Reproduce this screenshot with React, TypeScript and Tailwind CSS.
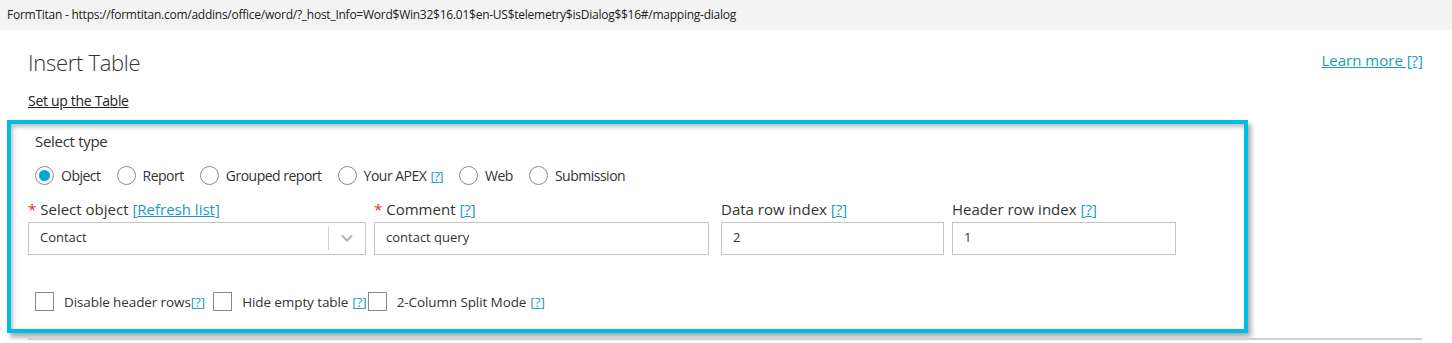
import React from "react"

const font = { fontFamily: '"Open Sans", "Noto Sans", sans-serif' }

function Help({ className = "" }: { className?: string }) {
  return <span className={`text-[#1a9ac9] ${className}`}>[<span className="underline">?</span>]</span>
}

function Radio({ label, checked, help }: { label: string; checked?: boolean; help?: boolean }) {
  return (
    <label className="flex items-center gap-[7px]">
      <span className="w-[19px] h-[19px] rounded-full border border-[#8a8a8a] flex items-center justify-center shrink-0 bg-white">
        {checked && <span className="w-[11px] h-[11px] rounded-full bg-[#00a6d6]" />}
      </span>
      <span className="text-[14px] text-[#333] tracking-[-0.5px]">
        {label}
        {help && <Help className="ml-1 text-[13px]" />}
      </span>
    </label>
  )
}

function Check({ label, tight, className = "" }: { label: string; tight?: boolean; className?: string }) {
  return (
    <label className={`flex items-center gap-[10px] ${className}`}>
      <span className="w-[19px] h-[19px] border border-[#8a8a8a] bg-white shrink-0" />
      <span className="text-[13.5px] text-[#333] tracking-[-0.1px]">
        {label}
        <Help className={tight ? "" : "ml-1"} />
      </span>
    </label>
  )
}

function Field({ label, required, help, children, width }: { label: string; required?: boolean; help: React.ReactNode; children: React.ReactNode; width: string }) {
  return (
    <div className={`flex flex-col ${width}`}>
      <div className="text-[15px] text-[#333] h-[26px] leading-[26px] whitespace-nowrap">
        {required && <span className="text-[#e0302c] mr-1">*</span>}
        {label} {help}
      </div>
      {children}
    </div>
  )
}

function TextBox({ value }: { value: string }) {
  return (
    <div className="h-[33px] border border-[#c4c4c4] bg-white flex items-center px-[11px] text-[13px] text-[#333]">
      {value}
    </div>
  )
}

export default function App() {
  return (
    <div className="w-[1452px] h-[343px] bg-white overflow-hidden" style={font}>
      <div className="h-[30px] bg-[#f3f3f3] flex items-center px-[7px] text-[12px] text-[#222] tracking-[-0.25px]">
        FormTitan - https://formtitan.com/addins/office/word/?_host_Info=Word$Win32$16.01$en-US$telemetry$isDialog$$16#/mapping-dialog
      </div>

      <div className="flex justify-between pl-[28px] pr-[29px] pt-[17px]">
        <div className="text-[22px] font-light text-[#333] leading-[30px] tracking-[-0.3px]">Insert Table</div>
        <a className="text-[15px] text-[#1a9ac9] underline mt-[2px]">Learn more [?]</a>
      </div>
      <div className="pl-[28px] mt-[15px] text-[14px] text-[#222] underline leading-[18px] tracking-[-0.3px]">Set up the Table</div>

      <div className="ml-[7px] mt-[10px] w-[1241px] h-[213px] border-[4px] border-[#00bde3] shadow-[3px_4px_5px_rgba(0,0,0,0.35),inset_2px_3px_4px_rgba(0,0,0,0.25)] pl-[17px] pt-[6px]">
        <div className="pl-[7px] text-[15px] text-[#333] leading-[22px] tracking-[-0.3px]">Select type</div>
        <div className="pl-[7px] mt-[13px] flex items-center gap-[16px]">
          <Radio label="Object" checked />
          <Radio label="Report" />
          <Radio label="Grouped report" />
          <Radio label="Your APEX" help />
          <Radio label="Web" />
          <Radio label="Submission" />
        </div>

        <div className="mt-[9px] flex gap-[8px]">
          <Field label="Select object" required width="w-[338px]" help={<span className="text-[#1a9ac9]">[<span className="underline">Refresh list</span>]</span>}>
            <div className="h-[33px] border border-[#c4c4c4] bg-white flex items-center text-[13px] text-[#333]">
              <span className="flex-1 px-[11px]">Contact</span>
              <span className="w-px h-[23px] bg-[#d0d0d0]" />
              <span className="w-[36px] flex items-center justify-center">
                <svg width="12" height="8" viewBox="0 0 12 8" fill="none" stroke="#b3b3b3" strokeWidth="2"><path d="M1 1.5l5 5 5-5" /></svg>
              </span>
            </div>
          </Field>
          <Field label="Comment" required width="w-[335px]" help={<Help />}>
            <TextBox value="contact query" />
          </Field>
          <div className="ml-[4px]">
            <Field label="Data row index" width="w-[223px]" help={<Help />}>
              <TextBox value="2" />
            </Field>
          </div>
          <Field label="Header row index" width="w-[224px]" help={<Help />}>
            <TextBox value="1" />
          </Field>
        </div>

        <div className="mt-[37px] pl-[7px] flex items-center">
          <Check label="Disable header rows" tight />
          <Check label="Hide empty table" className="ml-[8px]" />
          <Check label="2-Column Split Mode" className="ml-[1px]" />
        </div>
      </div>

      <div className="ml-[28px] mt-[5px] w-[1394px] h-[2px] bg-[#cfcfcf]" />
    </div>
  )
}
